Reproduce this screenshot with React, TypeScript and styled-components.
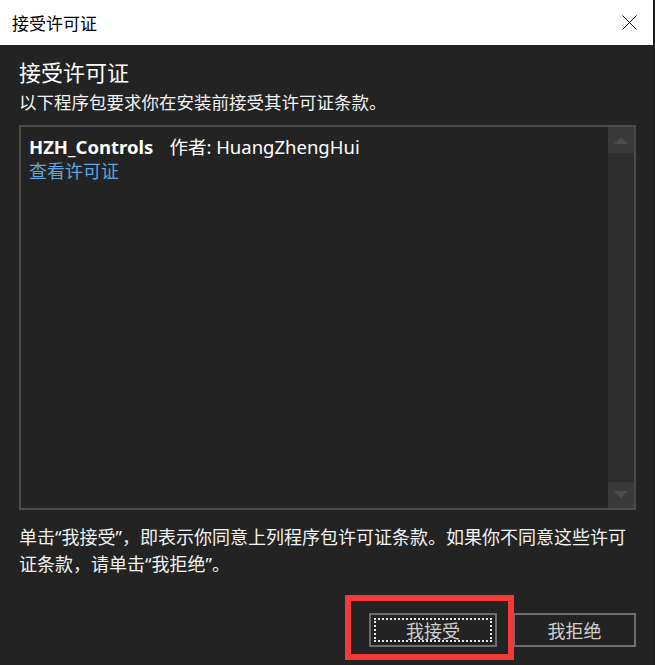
import React from "react";
import styled, { createGlobalStyle } from "styled-components";

const FONT = `"Noto Sans", "Noto Sans CJK SC", sans-serif`;

const GlobalStyle = createGlobalStyle`
    html, body {
        margin: 0;
        padding: 0;
        background: #1b1b1b;
    }
    body {
        font-family: ${FONT};
    }
`;

const Window = styled.div`
    width: 653px;
    height: 665px;
    background: #232323;
    display: flex;
    flex-direction: column;
    overflow: hidden;
`;

const TitleBar = styled.div`
    height: 45px;
    flex: none;
    background: #ffffff;
    display: flex;
    align-items: center;
    justify-content: space-between;
    padding: 0 16px 0 12px;
    box-sizing: border-box;
    font-size: 17px;
    color: #000;
`;

const CloseButton = styled.div`
    width: 15px;
    height: 15px;
    display: flex;
`;

const Body = styled.div`
    flex: 1;
    display: flex;
    flex-direction: column;
    padding: 12px 17px 0 19px;
`;

const Heading = styled.div`
    font-size: 22px;
    line-height: 30px;
    color: #ffffff;
`;

const Subtitle = styled.div`
    margin-top: 3px;
    font-size: 17.5px;
    line-height: 24px;
    color: #f2f2f2;
`;

const PackageList = styled.div`
    margin-top: 11px;
    height: 385px;
    box-sizing: border-box;
    border: 2px solid #4b4b4b;
    display: flex;
`;

const ListContent = styled.div`
    flex: 1;
    padding: 7px 8px;
`;

const PackageRow = styled.div`
    display: flex;
    align-items: baseline;
    gap: 16px;
    font-size: 18.5px;
    line-height: 26px;
    color: #ffffff;
`;

const PackageName = styled.span`
    font-weight: 700;
`;

const LicenseLink = styled.a`
    display: block;
    font-size: 18px;
    line-height: 22px;
    color: #5ea6dd;
    text-decoration: none;
    cursor: pointer;
`;

const Scrollbar = styled.div`
    width: 26px;
    flex: none;
    background: #2d2d2d;
    display: flex;
    flex-direction: column;
    justify-content: space-between;
`;

const ScrollButton = styled.div`
    height: 26px;
    background: #393939;
    display: flex;
    align-items: center;
    justify-content: center;
`;

const Notice = styled.div`
    margin-top: 14px;
    font-size: 18px;
    line-height: 27px;
    color: #f2f2f2;
`;

const Actions = styled.div`
    margin-top: 35px;
    display: flex;
    justify-content: flex-end;
    gap: 16px;
`;

const ButtonSlot = styled.div`
    position: relative;
    display: flex;
`;

const ActionButton = styled.button<{ $width: number; $focused?: boolean }>`
    width: ${(p) => p.$width}px;
    height: 34px;
    box-sizing: border-box;
    background: transparent;
    border: 2px solid #6d6d6d;
    color: #cfcfcf;
    font-family: ${FONT};
    font-size: 18px;
    padding: 0;
    outline: ${(p) => (p.$focused ? "2px dotted #e6e6e6" : "none")};
    outline-offset: -7px;
    cursor: pointer;
`;

const Highlight = styled.div`
    position: absolute;
    left: -24px;
    right: -17px;
    top: -18px;
    bottom: -13px;
    border: 6px solid #f53838;
    pointer-events: none;
`;

const Arrow = ({ up }: { up?: boolean }) => (
    <svg width="14" height="8" viewBox="0 0 14 8">
        <path d={up ? "M0 8 L7 1 L14 8 Z" : "M0 0 L7 7 L14 0 Z"} fill="#4c4c4c" />
    </svg>
);

const App = () => {
    return (
        <>
            <GlobalStyle />
            <Window>
                <TitleBar>
                    <span>接受许可证</span>
                    <CloseButton>
                        <svg width="15" height="15" viewBox="0 0 15 15">
                            <path d="M0.5 0.5 L14.5 14.5 M14.5 0.5 L0.5 14.5" stroke="#000" strokeWidth="1" />
                        </svg>
                    </CloseButton>
                </TitleBar>
                <Body>
                    <Heading>接受许可证</Heading>
                    <Subtitle>以下程序包要求你在安装前接受其许可证条款。</Subtitle>
                    <PackageList>
                        <ListContent>
                            <PackageRow>
                                <PackageName>HZH_Controls</PackageName>
                                <span>作者: HuangZhengHui</span>
                            </PackageRow>
                            <LicenseLink>查看许可证</LicenseLink>
                        </ListContent>
                        <Scrollbar>
                            <ScrollButton>
                                <Arrow up />
                            </ScrollButton>
                            <ScrollButton>
                                <Arrow />
                            </ScrollButton>
                        </Scrollbar>
                    </PackageList>
                    <Notice>
                        单击“我接受”，即表示你同意上列程序包许可证条款。如果你不同意这些许可
                        <br />
                        证条款，请单击“我拒绝”。
                    </Notice>
                    <Actions>
                        <ButtonSlot>
                            <ActionButton $width={128} $focused>
                                我接受
                            </ActionButton>
                            <Highlight />
                        </ButtonSlot>
                        <ButtonSlot>
                            <ActionButton $width={123}>我拒绝</ActionButton>
                        </ButtonSlot>
                    </Actions>
                </Body>
            </Window>
        </>
    );
};

export default App;
